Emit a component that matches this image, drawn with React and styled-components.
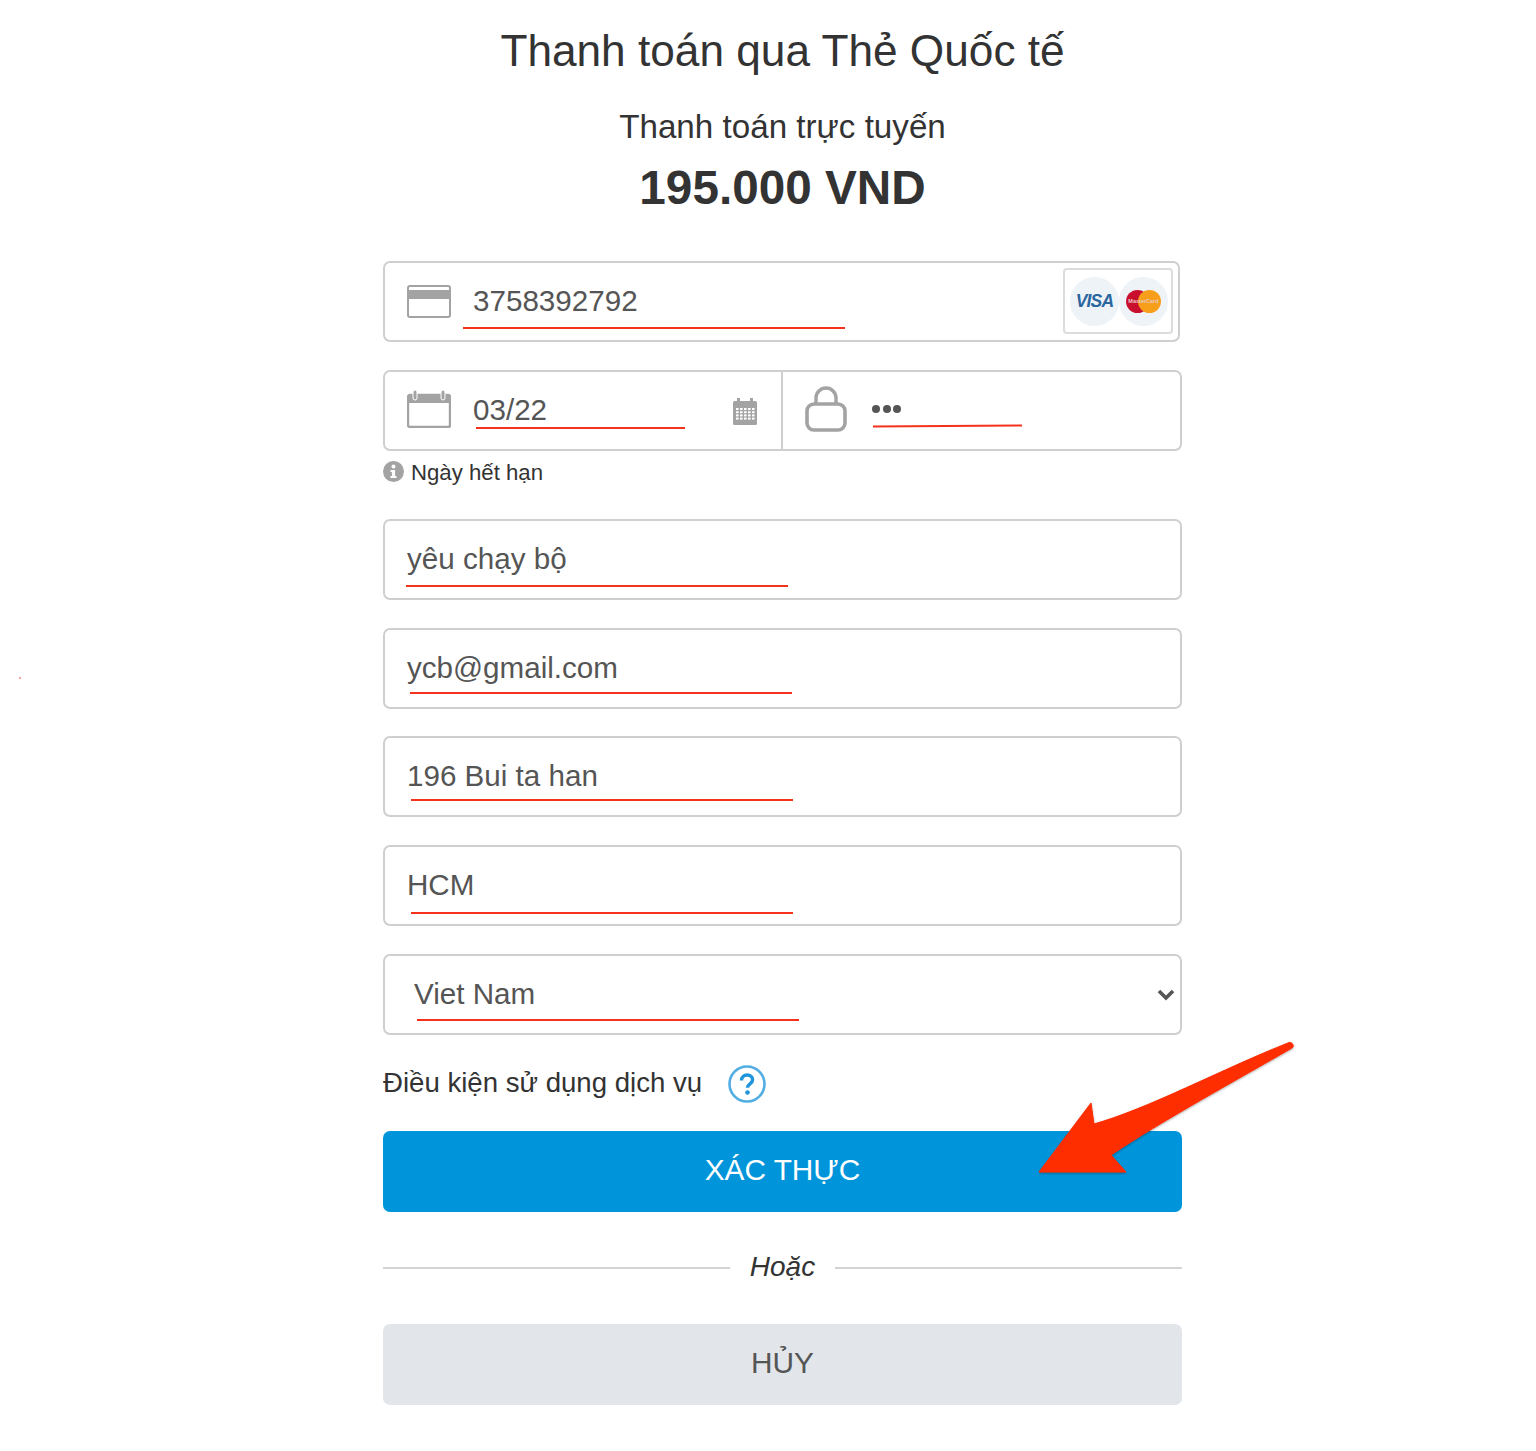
import React from "react";
import styled, { createGlobalStyle } from "styled-components";

const GlobalStyle = createGlobalStyle`
    html, body {
        margin: 0;
        padding: 0;
        background: #fff;
    }

    body {
        font-family: "Liberation Sans", Arial, sans-serif;
        color: #333;
    }
`;

const Page = styled.div`
    position: relative;
    width: 1536px;
    height: 1451px;
    overflow: hidden;
`;

const Form = styled.div`
    width: 799px;
    margin-left: 383px;
    padding-top: 22px;
`;

const Title = styled.h1`
    margin: 0;
    height: 57px;
    font-size: 44.2px;
    line-height: 57px;
    font-weight: 400;
    text-align: center;
    color: #333;
`;

const Subtitle = styled.div`
    margin-top: 26px;
    height: 44px;
    font-size: 33.2px;
    line-height: 44px;
    text-align: center;
    color: #333;
`;

const Amount = styled.div`
    margin-top: 13px;
    height: 52px;
    font-size: 47.7px;
    line-height: 52px;
    font-weight: 700;
    text-align: center;
    color: #333;
`;

const Field = styled.div`
    position: relative;
    box-sizing: border-box;
    display: flex;
    align-items: center;
    height: 81px;
    width: ${(p) => p.$width || "799px"};
    margin-top: ${(p) => p.$top || "28px"};
    padding-left: ${(p) => p.$pad || "22px"};
    border: 2px solid #cfcfcf;
    border-radius: 7px;
    background: #fff;
    font-size: 29.6px;
    color: #555;
`;

const SplitField = styled(Field)`
    padding-left: 0;
`;

const SplitCell = styled.div`
    position: relative;
    box-sizing: border-box;
    display: flex;
    align-items: center;
    height: 100%;
    width: ${(p) => p.$width};
    padding-left: 22px;
    border-left: ${(p) => (p.$divider ? "2px solid #cfcfcf" : "none")};
`;

const FieldIcon = styled.svg`
    flex: none;
    display: block;
    margin-right: ${(p) => p.$gap || "22px"};
    margin-top: ${(p) => p.$lift || "0"};
`;

const FieldValue = styled.span`
    white-space: nowrap;
    margin-top: -1px;
`;

const Dots = styled.div`
    display: flex;
    gap: 2.5px;
    margin-top: -3px;
`;

const Dot = styled.span`
    width: 8px;
    height: 8px;
    border-radius: 50%;
    background: #555;
`;

const RedLine = styled.div`
    position: absolute;
    left: ${(p) => p.$left}px;
    top: ${(p) => p.$top}px;
    width: ${(p) => p.$width}px;
    height: 2px;
    background: #f5331c;
    transform: rotate(${(p) => p.$tilt || 0}deg);
`;

const CardBadge = styled.div`
    position: absolute;
    right: 5px;
    top: 5px;
    box-sizing: border-box;
    display: flex;
    align-items: center;
    padding-left: 5px;
    width: 110px;
    height: 66px;
    border: 2px solid #dcdcdc;
    border-radius: 4px;
    background: #fff;
`;

const BadgeCircle = styled.div`
    position: relative;
    display: flex;
    align-items: center;
    justify-content: center;
    width: 49px;
    height: 49px;
    border-radius: 50%;
    background: #eef3f7;
`;

const VisaText = styled.span`
    font-size: 17.5px;
    font-weight: 700;
    font-style: italic;
    letter-spacing: -0.8px;
    color: #2a669f;
`;

const McText = styled.span`
    position: absolute;
    left: 6px;
    right: 6px;
    top: 20px;
    font-size: 5.5px;
    line-height: 8px;
    font-weight: 700;
    white-space: nowrap;
    text-align: center;
    overflow: hidden;
    color: #e9c9c4;
`;

const CalendarSmall = styled.svg`
    position: absolute;
    left: 348px;
    top: 26px;
`;

const Hint = styled.div`
    display: flex;
    align-items: center;
    gap: 7px;
    height: 32px;
    margin-top: 4px;
    font-size: 22.2px;
    color: #333;
`;

const HintText = styled.span`
    position: relative;
    top: 2px;
`;

const Terms = styled.div`
    display: flex;
    align-items: center;
    gap: 26px;
    height: 44px;
    margin-top: 27px;
    font-size: 27.6px;
    color: #333;
`;

const TermsLabel = styled.span`
    position: relative;
    top: -1px;
`;

const Button = styled.button`
    display: block;
    box-sizing: border-box;
    width: 799px;
    height: 81px;
    margin-top: ${(p) => p.$top};
    border: 0;
    border-radius: 7px;
    padding: 0 0 ${(p) => (p.$primary ? "4px" : "3px")};
    font-family: inherit;
    font-size: 29.8px;
    background: ${(p) => (p.$primary ? "#0095da" : "#e2e6ea")};
    color: ${(p) => (p.$primary ? "#fff" : "#555")};
`;

const Divider = styled.div`
    display: flex;
    align-items: center;
    gap: 20px;
    height: 40px;
    margin-top: 36px;
    font-size: 28px;
    font-style: italic;
    color: #333;

    &::before,
    &::after {
        content: "";
        flex: 1;
        height: 2px;
        background: #d4d4d4;
    }
`;

const DividerLabel = styled.span`
    position: relative;
    top: -1px;
`;

const Chevron = styled.svg`
    position: absolute;
    left: 771px;
    top: 32px;
`;

const Arrow = styled.svg`
    position: absolute;
    left: 1030px;
    top: 1030px;
`;

const Speck = styled.div`
    position: absolute;
    left: 19px;
    top: 677px;
    width: 2px;
    height: 2px;
    background: #f7a79c;
`;

const CardIcon = () => (
    <FieldIcon width="44" height="33" viewBox="0 0 44 33" $gap="22px">
        <rect x="1" y="1" width="42" height="31" rx="2" fill="#fff" stroke="#a3a3a3" strokeWidth="2" />
        <rect x="1" y="5" width="42" height="9" fill="#a3a3a3" />
    </FieldIcon>
);

const CalendarIcon = () => (
    <FieldIcon width="44" height="38" viewBox="0 0 44 38" $gap="22px" $lift="-3px">
        <rect x="1" y="5" width="42" height="32" rx="2" fill="#fff" stroke="#a3a3a3" strokeWidth="2.4" />
        <rect x="1" y="5" width="42" height="8" fill="#a3a3a3" />
        <rect x="6" y="0" width="4" height="10" rx="2" fill="#a3a3a3" stroke="#fff" strokeWidth="1" />
        <rect x="34" y="0" width="4" height="10" rx="2" fill="#a3a3a3" stroke="#fff" strokeWidth="1" />
    </FieldIcon>
);

const LockIcon = () => (
    <FieldIcon width="42" height="46" viewBox="0 0 42 46" $gap="25px" $lift="-4px">
        <path d="M11 20V12a10 10 0 0 1 20 0v8" fill="none" stroke="#a3a3a3" strokeWidth="3.4" />
        <rect x="2" y="18" width="38" height="26" rx="7" fill="#fff" stroke="#a3a3a3" strokeWidth="3.6" />
    </FieldIcon>
);

const calendarCells = [];
for (let row = 0; row < 4; row++) {
    for (let col = 0; col < 5; col++) {
        calendarCells.push(<rect key={`${row}-${col}`} x={3 + col * 4} y={10 + row * 3.2} width="2.6" height="2" fill="#fff" />);
    }
}

const InfoIcon = () => (
    <svg width="21" height="21" viewBox="0 0 21 21">
        <circle cx="10.5" cy="10.5" r="10.5" fill="#a3a3a3" />
        <circle cx="10.5" cy="5.6" r="2" fill="#fff" />
        <path d="M7.5 9h4.6v6h1.4v2H7.5v-2h1.4v-4H7.5z" fill="#fff" />
    </svg>
);

const HelpIcon = () => (
    <svg width="38" height="38" viewBox="0 0 38 38">
        <circle cx="19" cy="19" r="17.5" fill="#fff" stroke="#51ade2" strokeWidth="2.6" />
        <path d="M13.5 15.500c0-3.500 2.500-5.500 5.600-5.500 3.200 0 5.500 2 5.500 4.800 0 4.200-5.100 4-5.100 8" fill="none" stroke="#1f95dc" strokeWidth="3.4" />
        <circle cx="19.500" cy="27.500" r="2.300" fill="#1f95dc" />
    </svg>
);

export default function App() {
    return (
        <Page>
            <GlobalStyle />
            <Form>
                <Title>Thanh toán qua Thẻ Quốc tế</Title>
                <Subtitle>Thanh toán trực tuyến</Subtitle>
                <Amount>195.000 VND</Amount>

                <Field $width="797px" $top="47px">
                    <CardIcon />
                    <FieldValue>3758392792</FieldValue>
                    <RedLine $left={78} $top={64} $width={382} />
                    <CardBadge>
                        <BadgeCircle>
                            <VisaText>VISA</VisaText>
                        </BadgeCircle>
                        <BadgeCircle>
                            <svg width="35" height="23" viewBox="0 0 35 23">
                                <circle cx="11.500" cy="11.500" r="11.500" fill="#c8102e" />
                                <circle cx="23.500" cy="11.500" r="11.500" fill="#f79e1b" />
                            </svg>
                            <McText>MasterCard</McText>
                        </BadgeCircle>
                    </CardBadge>
                </Field>

                <SplitField $top="28px">
                    <SplitCell $width="396px">
                        <CalendarIcon />
                        <FieldValue>03/22</FieldValue>
                        <RedLine $left={91} $top={55} $width={209} />
                        <CalendarSmall width="24" height="27" viewBox="0 0 24 27">
                            <rect x="0" y="3" width="24" height="24" rx="1.500" fill="#a3a3a3" />
                            <rect x="4" y="0" width="3" height="5" fill="#a3a3a3" />
                            <rect x="17" y="0" width="3" height="5" fill="#a3a3a3" />
                            {calendarCells}
                        </CalendarSmall>
                    </SplitCell>
                    <SplitCell $width="399px" $divider>
                        <LockIcon />
                        <Dots>
                            <Dot />
                            <Dot />
                            <Dot />
                        </Dots>
                        <RedLine $left={90} $top={53} $width={149} $tilt={-0.4} />
                    </SplitCell>
                </SplitField>

                <Hint>
                    <InfoIcon />
                    <HintText>Ngày hết hạn</HintText>
                </Hint>

                <Field $top="32px">
                    <FieldValue>yêu chạy bộ</FieldValue>
                    <RedLine $left={21} $top={64} $width={382} />
                </Field>
                <Field>
                    <FieldValue>ycb@gmail.com</FieldValue>
                    <RedLine $left={25} $top={62} $width={382} />
                </Field>
                <Field $top="27px">
                    <FieldValue>196 Bui ta han</FieldValue>
                    <RedLine $left={26} $top={61} $width={382} />
                </Field>
                <Field>
                    <FieldValue>HCM</FieldValue>
                    <RedLine $left={26} $top={65} $width={382} />
                </Field>
                <Field $pad="29px">
                    <FieldValue>Viet Nam</FieldValue>
                    <RedLine $left={32} $top={63} $width={382} />
                    <Chevron width="20" height="14" viewBox="0 0 20 14">
                        <path d="M3 3l7 7 7-7" fill="none" stroke="#555" strokeWidth="3.600" />
                    </Chevron>
                </Field>

                <Terms>
                    <TermsLabel>Điều kiện sử dụng dịch vụ</TermsLabel>
                    <HelpIcon />
                </Terms>

                <Button $primary $top="25px">XÁC THỰC</Button>

                <Divider>
                    <DividerLabel>Hoặc</DividerLabel>
                </Divider>

                <Button $top="36px">HỦY</Button>
            </Form>

            <Speck />

            <Arrow width="270" height="150" viewBox="0 0 270 150">
                <defs>
                    <filter id="arrowShadow" x="-10%" y="-10%" width="120%" height="130%">
                        <feDropShadow dx="0" dy="1" stdDeviation="1" floodColor="#000" floodOpacity="0.35" />
                    </filter>
                </defs>
                <path
                    d="M9 142 L61 73 L64 94 C120 78 190 40 258 13 C262 11 265 16 262 18 C210 48 130 92 81 125 L96 142 Z"
                    fill="#ff2d00"
                    stroke="#ff2d00"
                    strokeLinejoin="round"
                    strokeWidth="1"
                    filter="url(#arrowShadow)"
                />
            </Arrow>
        </Page>
    );
}
